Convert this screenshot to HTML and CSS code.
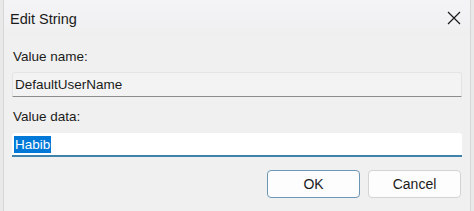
FILE: index.html
```html
<!DOCTYPE html>
<html lang="en">
<head>
    <meta charset="UTF-8">
    <title>Edit String</title>
    <link rel="stylesheet" href="styles.css">
</head>
<body>
    <div class="dialog">
        <div class="title-bar">
            <span class="title">Edit String</span>
            <button class="close-btn" aria-label="Close">
                <svg width="14" height="14" viewBox="0 0 14 14">
                    <path d="M1 1 L13 13 M13 1 L1 13" stroke="#1a1a1a" stroke-width="1.2" fill="none"/>
                </svg>
            </button>
        </div>
        <div class="content">
            <label class="field-label">Value name:</label>
            <div class="field readonly">DefaultUserName</div>

            <label class="field-label second">Value data:</label>
            <div class="field active"><span class="selected">Habib</span></div>

            <div class="buttons">
                <button class="btn primary">OK</button>
                <button class="btn">Cancel</button>
            </div>
        </div>
    </div>
</body>
</html>
```

FILE: styles.css
```css
* {
    margin: 0;
    padding: 0;
    box-sizing: border-box;
}

body {
    width: 474px;
    height: 211px;
    overflow: hidden;
    background: #e9e9e9;
    font-family: "Liberation Sans", Arial, sans-serif;
    color: #1b1b1b;
}

.dialog {
    margin-left: 3px;
    width: 468px;
    height: 211px;
    border-left: 1px solid #d6d6d6;
    border-right: 1px solid #d6d6d6;
    background: #f0f0f0;
    display: flex;
    flex-direction: column;
}

.title-bar {
    height: 36px;
    display: flex;
    align-items: center;
    justify-content: space-between;
    padding-left: 6px;
    padding-right: 9px;
    background: linear-gradient(#f4f4f6, #f1f1f3 70%, #efefef);
}

.title {
    font-size: 14.5px;
    margin-top: 1px;
}

.close-btn {
    border: none;
    background: none;
    width: 14px;
    height: 14px;
    display: flex;
}

.content {
    padding: 13px 8px 0 8px;
    display: flex;
    flex-direction: column;
}

.field-label {
    font-size: 13.5px;
    line-height: 16px;
    padding-left: 1px;
}

.field-label.second {
    margin-top: 12px;
}

.field {
    font-size: 13.5px;
    padding-left: 2px;
    display: flex;
    align-items: center;
}

.field.readonly {
    margin-top: 7px;
    height: 25px;
    background: #f3f3f3;
    border: 1px solid #e4e4e4;
    border-bottom: 1px solid #8c8c8c;
    border-radius: 3px 3px 0 0;
}

.field.active {
    margin-top: 8px;
    height: 24px;
    background: #ffffff;
    border-bottom: 2px solid #3f83ad;
    border-radius: 3px 3px 0 0;
    padding-left: 2px;
}

.selected {
    background: #0078d7;
    color: #ffffff;
    line-height: 17px;
    padding: 0 1px;
}

.buttons {
    margin-top: 13px;
    padding-right: 1px;
    display: flex;
    justify-content: flex-end;
    gap: 8px;
}

.btn {
    width: 93px;
    height: 28px;
    font-family: "Liberation Sans", Arial, sans-serif;
    font-size: 14px;
    color: #1b1b1b;
    background: #fdfdfd;
    border: 1px solid #d3d3d3;
    border-radius: 4px;
}

.btn.primary {
    border-color: #6c97b4;
}
```
